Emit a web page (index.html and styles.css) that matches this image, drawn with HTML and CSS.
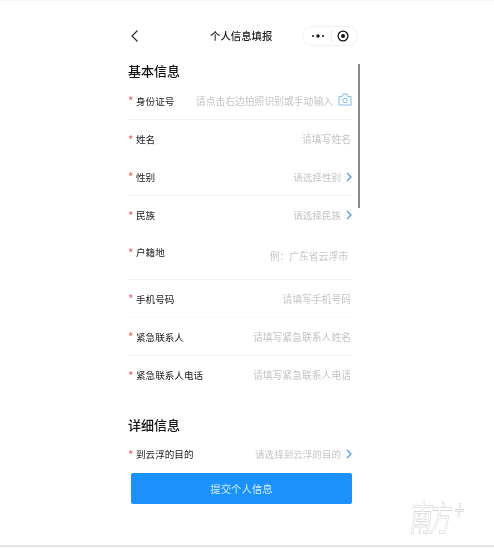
FILE: index.html
```html
<html>
<head>
<meta charset="utf-8">
<link rel="stylesheet" href="styles.css">
</head>
<body>
<div class="page">
	<div class="nav">
		<svg class="back" width="10" height="14" viewBox="0 0 10 14"><path d="M7.5 1.5 L2 7 L7.5 12.5" fill="none" stroke="#222" stroke-width="1.1"/></svg>
		<div class="nav_title">个人信息填报</div>
		<div class="capsule">
			<svg width="14" height="6" viewBox="0 0 14 6"><circle cx="2" cy="3" r="1" fill="#111"/><circle cx="7" cy="3" r="1.7" fill="#111"/><circle cx="12" cy="3" r="1" fill="#111"/></svg>
			<div class="capsule_line"></div>
			<svg width="12" height="12" viewBox="0 0 12 12"><circle cx="6" cy="6" r="4.9" fill="none" stroke="#111" stroke-width="1.3"/><circle cx="6" cy="6" r="2" fill="#111"/></svg>
		</div>
	</div>

	<div class="form">
		<div class="heading">基本信息</div>
		<div class="row line">
			<div class="label"><span class="star">*</span>身份证号</div>
			<div class="value">请点击右边拍照识别或手动输入</div>
			<svg class="camera" width="14" height="13" viewBox="0 0 14 13"><path d="M1 3.5 H4 L5 1 H9 L10 3.5 H13 V12 H1 Z" fill="none" stroke="#6db4f2" stroke-width="0.9"/><circle cx="7" cy="7.5" r="2.2" fill="none" stroke="#6db4f2" stroke-width="0.9"/></svg>
		</div>
		<div class="row">
			<div class="label"><span class="star">*</span>姓名</div>
			<div class="value">请填写姓名</div>
		</div>
		<div class="row line">
			<div class="label"><span class="star">*</span>性别</div>
			<div class="value pick">请选择性别</div>
			<svg class="arrow" width="6" height="10" viewBox="0 0 6 10"><path d="M1 1 L5 5 L1 9" fill="none" stroke="#3d9df0" stroke-width="1.2"/></svg>
		</div>
		<div class="row">
			<div class="label"><span class="star">*</span>民族</div>
			<div class="value pick">请选择民族</div>
			<svg class="arrow" width="6" height="10" viewBox="0 0 6 10"><path d="M1 1 L5 5 L1 9" fill="none" stroke="#3d9df0" stroke-width="1.2"/></svg>
		</div>
		<div class="row tall line">
			<div class="label"><span class="star">*</span>户籍地</div>
			<div class="value place">例：广东省云浮市</div>
		</div>
		<div class="row line_faint">
			<div class="label"><span class="star">*</span>手机号码</div>
			<div class="value">请填写手机号码</div>
		</div>
		<div class="row line">
			<div class="label"><span class="star">*</span>紧急联系人</div>
			<div class="value">请填写紧急联系人姓名</div>
		</div>
		<div class="row">
			<div class="label"><span class="star">*</span>紧急联系人电话</div>
			<div class="value">请填写紧急联系人电话</div>
		</div>

		<div class="heading second">详细信息</div>
		<div class="row">
			<div class="label"><span class="star">*</span>到云浮的目的</div>
			<div class="value pick">请选择到云浮的目的</div>
			<svg class="arrow" width="6" height="10" viewBox="0 0 6 10"><path d="M1 1 L5 5 L1 9" fill="none" stroke="#3d9df0" stroke-width="1.2"/></svg>
		</div>
		<div class="submit">提交个人信息</div>
	</div>

	<div class="scrollbar"></div>
	<div class="mark">南方<span class="mark_plus">+</span></div>
</div>
</body>
</html>
```

FILE: styles.css
```css
html, body {
	margin: 0;
	padding: 0;
	background-color: #ffffff;
}
.page {
	position: relative;
	width: 494px;
	height: 547px;
	overflow: hidden;
	box-sizing: border-box;
	border-top: 1px solid #f4f4f4;
	border-bottom: 2px solid #e4e4e4;
	font-family: "Noto Sans CJK SC", "Noto Sans", sans-serif;
	color: #222222;
	filter: blur(0.3px);
}
.nav {
	display: flex;
	align-items: center;
	height: 20px;
	margin: 25px 136px 0 130px;
	width: 228px;
	position: relative;
}
.nav_title {
	position: absolute;
	left: 80px;
	width: 62px;
	font-size: 10.4px;
	font-weight: 500;
	line-height: 20px;
	white-space: nowrap;
	color: #1a1a1a;
}
.capsule {
	display: flex;
	align-items: center;
	justify-content: space-between;
	box-sizing: border-box;
	width: 56px;
	height: 20px;
	margin-left: auto;
	padding: 0 8px;
	border: 1px solid #f2f2f2;
	border-radius: 10px;
}
.capsule_line {
	width: 1px;
	height: 12px;
	background-color: #eeeeee;
}
.form {
	width: 224px;
	margin: 16px 0 0 128px;
}
.heading {
	height: 20px;
	font-size: 13px;
	font-weight: 500;
	line-height: 18px;
	color: #111111;
}
.second {
	padding-top: 21px;
	line-height: 20px;
}
.row {
	display: flex;
	align-items: center;
	box-sizing: border-box;
	height: 38px;
	font-size: 9.8px;
}
.line {
	border-bottom: 1px solid #f3f3f3;
}
.line_faint {
	border-bottom: 1px solid #f9f9f9;
}
.tall {
	height: 46px;
	align-items: flex-start;
	padding-top: 11px;
}
.label {
	display: flex;
	align-items: center;
	white-space: nowrap;
	font-size: 9.6px;
	color: #1a1a1a;
}
.star {
	width: 8px;
	margin-top: 1px;
	font-size: 12px;
	line-height: 12px;
	color: #f0616d;
}
.value {
	margin-left: auto;
	margin-right: 1px;
	white-space: nowrap;
	color: #c4c4c4;
}
.pick {
	font-size: 9.55px;
}
.place {
	margin-right: 4px;
	margin-top: 4px;
}
.camera {
	margin-left: 4px;
	margin-top: -3px;
}
.arrow {
	margin-left: 4px;
}
.submit {
	margin-left: 3px;
	height: 31px;
	border-radius: 2px;
	background-color: #1b91fd;
	color: #d8ecff;
	font-size: 10.4px;
	line-height: 31px;
	text-align: center;
}
.scrollbar {
	position: absolute;
	left: 358px;
	top: 63px;
	width: 2px;
	height: 144px;
	background-color: #8a8a8a;
}
.mark {
	position: absolute;
	left: 415px;
	top: 487px;
	font-size: 29px;
	line-height: 34px;
	white-space: nowrap;
	letter-spacing: -3px;
	color: #ffffff;
	-webkit-text-stroke: 0.5px #cccccc;
	transform-origin: left top;
	transform: scale(0.75, 1.2) skewX(-12deg);
}
.mark_plus {
	display: inline-block;
	margin-left: 5px;
	font-size: 22px;
	vertical-align: 9px;
}
```
